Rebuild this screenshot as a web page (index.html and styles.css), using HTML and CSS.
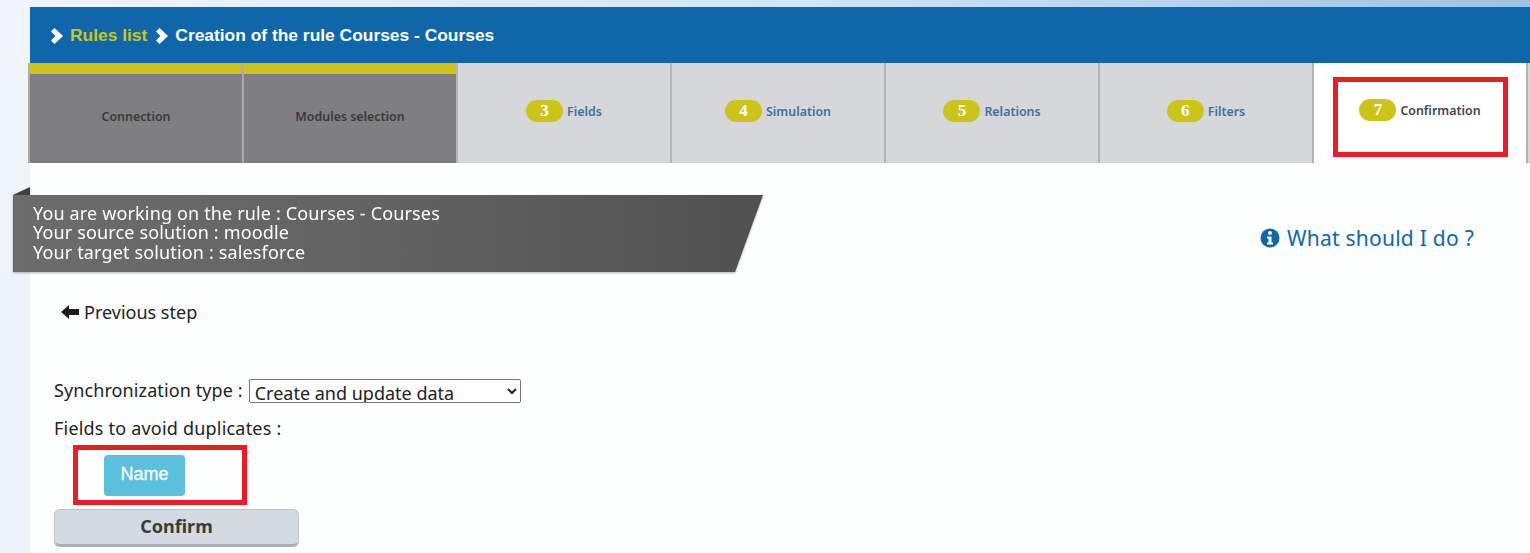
FILE: index.html
```html
<!DOCTYPE html>
<html lang="en">
<head>
    <meta charset="UTF-8">
    <meta name="viewport" content="width=device-width, initial-scale=1.0">
    <title>Creation of the rule</title>
    <link rel="stylesheet" href="styles.css">
</head>
<body>
    <div class="page">
        <div class="title-bar">
            <svg class="chevron" viewBox="0 0 14 16"><path d="M4.500 0 13 8 4.500 16 1 12.500 5.500 8 1 3.500Z"/></svg>
            <a class="title-link" href="#">Rules list</a>
            <svg class="chevron" viewBox="0 0 14 16"><path d="M4.500 0 13 8 4.500 16 1 12.500 5.500 8 1 3.500Z"/></svg>
            <span>Creation of the rule Courses - Courses</span>
        </div>

        <div class="steps">
            <div class="step step-done">Connection</div>
            <div class="step step-done">Modules selection</div>
            <div class="step"><span class="step-num">3</span><span class="step-label">Fields</span></div>
            <div class="step"><span class="step-num">4</span><span class="step-label">Simulation</span></div>
            <div class="step"><span class="step-num">5</span><span class="step-label">Relations</span></div>
            <div class="step"><span class="step-num">6</span><span class="step-label">Filters</span></div>
            <div class="step step-current"><span class="step-num">7</span><span class="step-label">Confirmation</span></div>
            <div class="step step-rest"></div>
        </div>

        <div class="info-row">
            <div class="ribbon">
                <div class="ribbon-fold"></div>
                <div class="ribbon-body">
                    You are working on the rule : Courses - Courses<br>
                    Your source solution : moodle<br>
                    Your target solution : salesforce
                </div>
            </div>
            <a class="help-link" href="#">
                <svg class="help-icon" viewBox="0 0 20 20">
                    <circle cx="10" cy="10" r="9.500" fill="#0f67a9"/>
                    <circle cx="10" cy="5" r="2" fill="#fff"/>
                    <path d="M7 8.500h4.500v6H13v2H7v-2h1.500v-4H7z" fill="#fff"/>
                </svg>
                What should I do ?
            </a>
        </div>

        <a class="back-link" href="#">
            <svg class="back-icon" viewBox="0 0 18 14"><path d="M8 0v4h10v6H8v4L0 7z"/></svg>
            Previous step
        </a>

        <div class="form-row">
            <label class="sync-label" for="sync">Synchronization type :</label>
            <select id="sync" class="sync-select">
                <option>Create and update data</option>
            </select>
        </div>
        <div class="form-label">Fields to avoid duplicates :</div>
        <div class="field-list"><span class="field-tag">Name</span></div>
        <button class="confirm-btn" type="button">Confirm</button>
    </div>

    <div class="mark mark-step"></div>
    <div class="mark mark-field"></div>
</body>
</html>
```

FILE: styles.css
```css
html, body {
    height: 553px;
    overflow: hidden;
}
body {
    margin: 0;
    padding: 7px 0 0 30px;
    box-sizing: border-box;
    font-family: "Noto Sans", sans-serif;
    background: linear-gradient(100deg, #f0f5fb 0%, #d5e3f2 50%, #97bce2 100%);
    color: #222;
}
.page {
    background-color: #fdfefe;
    height: 546px;
}
.title-bar {
    display: flex;
    align-items: center;
    gap: 6px;
    height: 56px;
    padding: 1px 0 0 20px;
    box-sizing: border-box;
    background-color: #0f67a9;
    color: #fff;
    font-family: "Liberation Sans", Arial, sans-serif;
    font-size: 17.400px;
    font-weight: bold;
}
.title-link {
    color: #cdc41a;
    text-decoration: none;
    margin-right: 2px;
}
.chevron {
    width: 14px;
    height: 16px;
    fill: #fff;
}
.steps {
    display: flex;
    height: 100px;
    margin-left: -2px;
}
.step {
    flex: 0 0 214px;
    box-sizing: border-box;
    display: flex;
    align-items: center;
    justify-content: center;
    gap: 4px;
    padding-bottom: 4px;
    background-color: #d6d7d9;
    border-left: 2px solid #b3b4b6;
    font-size: 12.400px;
    font-weight: 600;
}
.step-done {
    background-color: #7f7e80;
    border-top: 11px solid #cdc41a;
    border-left-color: #aaa9ab;
    color: #3a3a3a;
}
.step-current {
    background-color: #fff;
    color: #444;
}
.step-rest {
    flex-basis: 4px;
}
.step-num {
    width: 37px;
    height: 22px;
    border-radius: 11px;
    background-color: #cdc41a;
    color: #fff;
    font-family: "Liberation Serif", serif;
    font-size: 17px;
    font-weight: bold;
    line-height: 22px;
    text-align: center;
}
.step-label {
    color: #3f6fa0;
}
.step-current .step-num {
    margin-top: -3px;
}
.step-current .step-label {
    margin-top: -2px;
    color: #444;
}
.info-row {
    display: flex;
    justify-content: space-between;
    align-items: flex-start;
    margin-top: 24px;
}
.ribbon {
    margin-left: -17px;
    width: 750px;
    filter: drop-shadow(0 1px 1px rgba(0, 0, 0, 0.3));
}
.ribbon-fold {
    width: 17px;
    height: 8px;
    background-color: #3f3f3f;
    clip-path: polygon(100% 0, 100% 100%, 0 100%);
}
.ribbon-body {
    box-sizing: border-box;
    height: 77px;
    padding: 8.700px 0 0 20px;
    background: linear-gradient(90deg, #6c6c6c, #626262 50%, #505050);
    clip-path: polygon(0 0, 100% 0, 96.270% 100%, 0 100%);
    color: #fff;
    font-size: 18px;
    letter-spacing: 0.150px;
    line-height: 19.500px;
}
.help-link {
    display: flex;
    align-items: center;
    gap: 7px;
    margin: 37px 56px 0 0;
    color: #0f67a9;
    font-size: 21px;
    letter-spacing: 0.250px;
    text-decoration: none;
}
.help-icon {
    width: 20px;
    height: 20px;
}
.back-link {
    display: flex;
    align-items: center;
    gap: 5px;
    width: max-content;
    margin: 28px 0 0 31px;
    color: #222;
    font-size: 18px;
    text-decoration: none;
}
.back-icon {
    width: 18px;
    height: 14px;
    fill: #1c1c1c;
}
.form-row {
    display: flex;
    align-items: center;
    gap: 6px;
    margin: 55px 0 0 24px;
    font-size: 18px;
    letter-spacing: 0.100px;
}
.sync-label {
    margin: -3px 0 -1px;
}
.sync-select {
    width: 272px;
    height: 24px;
    padding: 0 1px;
    background-color: #fff;
    border: 1px solid #767676;
    border-radius: 2px;
    color: #222;
    font-family: "Noto Sans", sans-serif;
    font-size: 18px;
}
.form-label {
    margin: 13px 0 0 24px;
    font-size: 18px;
    letter-spacing: 0.200px;
}
.field-list {
    margin: 15px 0 0 74px;
}
.field-tag {
    display: block;
    box-sizing: border-box;
    width: 81px;
    height: 41px;
    border-radius: 4px;
    background-color: #5bc0de;
    color: #fff;
    font-family: "Liberation Sans", Arial, sans-serif;
    font-size: 18px;
    -webkit-text-stroke: 0.300px #fff;
    line-height: 39px;
    text-align: center;
}
.confirm-btn {
    display: block;
    width: 245px;
    height: 38px;
    margin: 13px 0 0 24px;
    padding: 0 0 3px;
    background-color: #d3dbe2;
    border: 1px solid #bcc4cb;
    border-bottom: 3px solid #a9b1b9;
    border-radius: 6px;
    color: #3a3a3a;
    font-family: "Noto Sans", sans-serif;
    font-size: 18px;
    font-weight: bold;
}
.mark {
    position: absolute;
    box-sizing: border-box;
    border: 5px solid #ed1c24;
}
.mark-step {
    left: 1333px;
    top: 77px;
    width: 175px;
    height: 80px;
}
.mark-field {
    left: 73px;
    top: 445px;
    width: 174px;
    height: 60px;
}
```
